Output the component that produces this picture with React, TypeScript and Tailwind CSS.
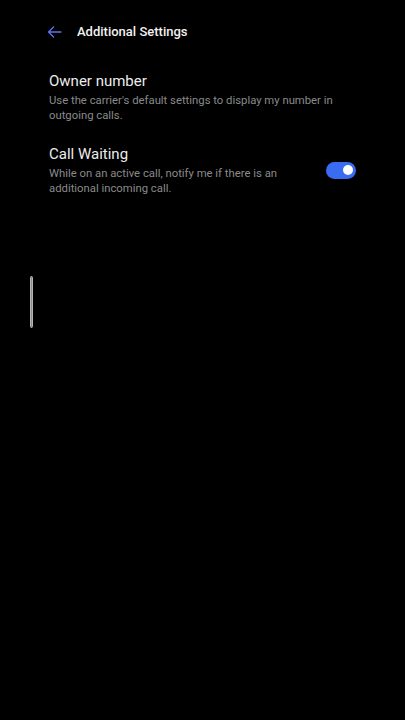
export default function App() {
  return (
    <div
      className="relative w-[405px] h-[720px] bg-black overflow-hidden"
      style={{ fontFamily: 'Roboto, "Noto Sans", sans-serif' }}
    >
      <div className="flex items-center h-16 pl-[47px] gap-[15px]">
        <svg width="15" height="12" viewBox="0 0 15 12" fill="none">
          <path
            d="M14 6H1.5M6.5 1L1.5 6l5 5"
            stroke="#5b74ea"
            strokeWidth="1.4"
            strokeLinecap="round"
            strokeLinejoin="round"
          />
        </svg>
        <span className="text-[13px] font-medium text-[#f2f2f2]">Additional Settings</span>
      </div>

      <div className="flex flex-col px-[49px] mt-[7px]">
        <div className="flex flex-col">
          <span className="text-[15px] leading-[20px] text-[#ececec]">Owner number</span>
          <span className="mt-[2px] text-[11.3px] leading-[15px] text-[#8a8a8a]">
            Use the carrier's default settings to display my number in outgoing calls.
          </span>
        </div>

        <div className="flex items-center mt-[21px]">
          <div className="flex flex-col flex-1 mr-[16px]">
            <span className="text-[15px] leading-[20px] text-[#ececec]">Call Waiting</span>
            <span className="mt-[2px] text-[11.3px] leading-[15px] text-[#8a8a8a]">
              While on an active call, notify me if there is an additional incoming call.
            </span>
          </div>
          <div className="flex items-center justify-end w-[30px] h-[17px] rounded-full bg-[#3a6cf2] pr-[3px]">
            <div className="w-[10px] h-[10px] rounded-full bg-white" />
          </div>
        </div>
      </div>

      <div className="absolute left-[30px] top-[276px] w-[3px] h-[52px] rounded-full bg-[#8d8d8d] border border-[#b5b5b5]" />
    </div>
  )
}
